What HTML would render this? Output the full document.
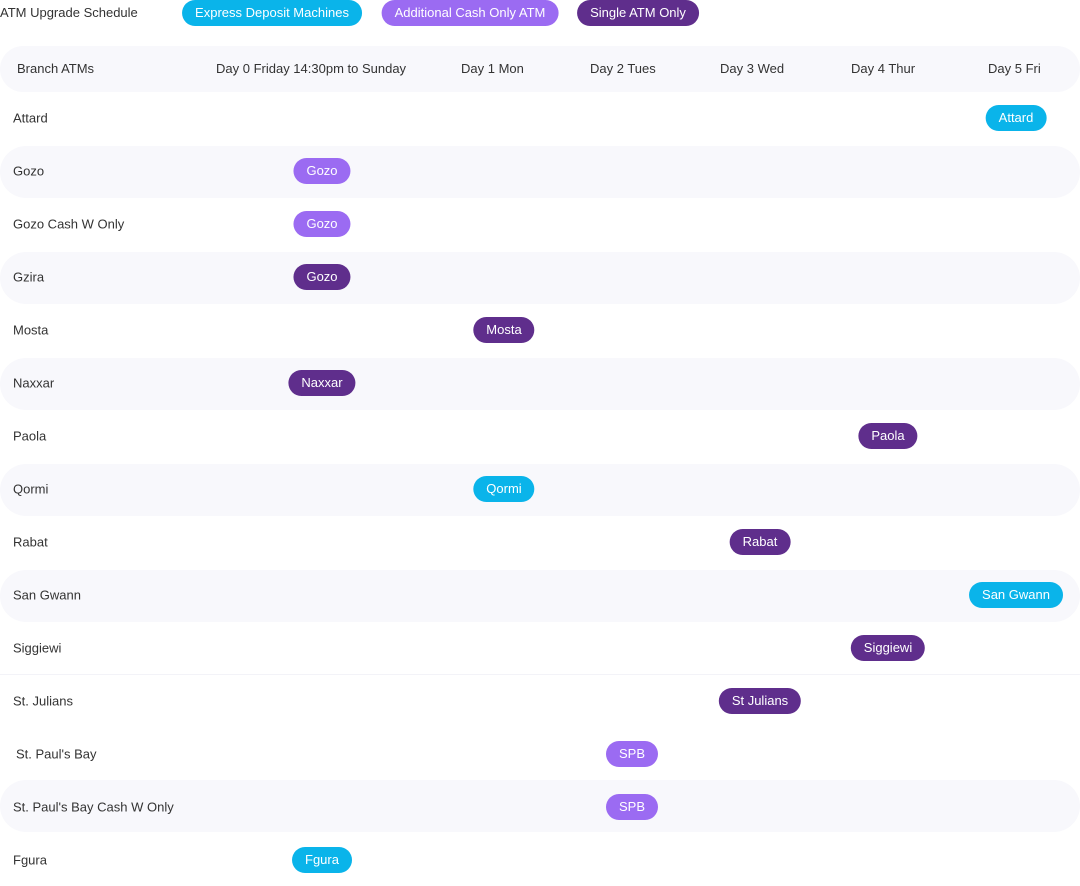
<!DOCTYPE html>
<html><head><meta charset="utf-8"><style>
body{margin:0;width:1080px;height:886px;background:#fff;font-family:"Liberation Sans",sans-serif;font-size:13px;color:#333;position:relative;overflow:hidden}
.a{position:absolute;white-space:nowrap}
.row{position:absolute;left:0;width:1080px;height:52px;border-radius:0 26px 26px 0}
.s{background:#f8f8fc;border-radius:26px}
.lbl{position:absolute;left:13px;transform:translateY(-50%)}
.p{position:absolute;transform:translate(-50%,-50%);height:26px;line-height:26px;padding:0 13px;border-radius:13px;color:#fff;font-size:13px;white-space:nowrap}
.c{background:#0ab4ea}.l{background:#9b6bf2}.d{background:#5f2e8c}
</style></head><body>
<div class="a" style="left:0;top:5px">ATM Upgrade Schedule</div>
<div class="p c" style="left:272px;top:13px">Express Deposit Machines</div>
<div class="p l" style="left:470px;top:13px">Additional Cash Only ATM</div>
<div class="p d" style="left:638px;top:13px">Single ATM Only</div>

<div class="row s" style="top:46px;height:46px;border-radius:23px"></div>
<div class="a" style="left:17px;top:61px">Branch ATMs</div>
<div class="a" style="left:216px;top:61px">Day 0 Friday 14:30pm to Sunday</div>
<div class="a" style="left:461px;top:61px">Day 1 Mon</div>
<div class="a" style="left:590px;top:61px">Day 2 Tues</div>
<div class="a" style="left:720px;top:61px">Day 3 Wed</div>
<div class="a" style="left:851px;top:61px">Day 4 Thur</div>
<div class="a" style="left:988px;top:61px">Day 5 Fri</div>

<div class="row s" style="top:146px"></div>
<div class="row s" style="top:252px"></div>
<div class="row s" style="top:358px"></div>
<div class="row s" style="top:464px"></div>
<div class="row s" style="top:570px"></div>
<div class="row" style="top:674px;height:1px;background:#f3f3f8"></div>
<div class="row s" style="top:780px"></div>

<div class="lbl" style="top:118px">Attard</div><div class="p c" style="left:1016px;top:118px">Attard</div>
<div class="lbl" style="top:171px">Gozo</div><div class="p l" style="left:322px;top:171px">Gozo</div>
<div class="lbl" style="top:224px">Gozo Cash W Only</div><div class="p l" style="left:322px;top:224px">Gozo</div>
<div class="lbl" style="top:277px">Gzira</div><div class="p d" style="left:322px;top:277px">Gozo</div>
<div class="lbl" style="top:330px">Mosta</div><div class="p d" style="left:504px;top:330px">Mosta</div>
<div class="lbl" style="top:383px">Naxxar</div><div class="p d" style="left:322px;top:383px">Naxxar</div>
<div class="lbl" style="top:436px">Paola</div><div class="p d" style="left:888px;top:436px">Paola</div>
<div class="lbl" style="top:489px">Qormi</div><div class="p c" style="left:504px;top:489px">Qormi</div>
<div class="lbl" style="top:542px">Rabat</div><div class="p d" style="left:760px;top:542px">Rabat</div>
<div class="lbl" style="top:595px">San Gwann</div><div class="p c" style="left:1016px;top:595px">San Gwann</div>
<div class="lbl" style="top:648px">Siggiewi</div><div class="p d" style="left:888px;top:648px">Siggiewi</div>
<div class="lbl" style="top:701px">St. Julians</div><div class="p d" style="left:760px;top:701px">St Julians</div>
<div class="lbl" style="top:754px;left:16px">St. Paul's Bay</div><div class="p l" style="left:632px;top:754px">SPB</div>
<div class="lbl" style="top:807px">St. Paul's Bay Cash W Only</div><div class="p l" style="left:632px;top:807px">SPB</div>
<div class="lbl" style="top:860px">Fgura</div><div class="p c" style="left:322px;top:860px">Fgura</div>
</body></html>
